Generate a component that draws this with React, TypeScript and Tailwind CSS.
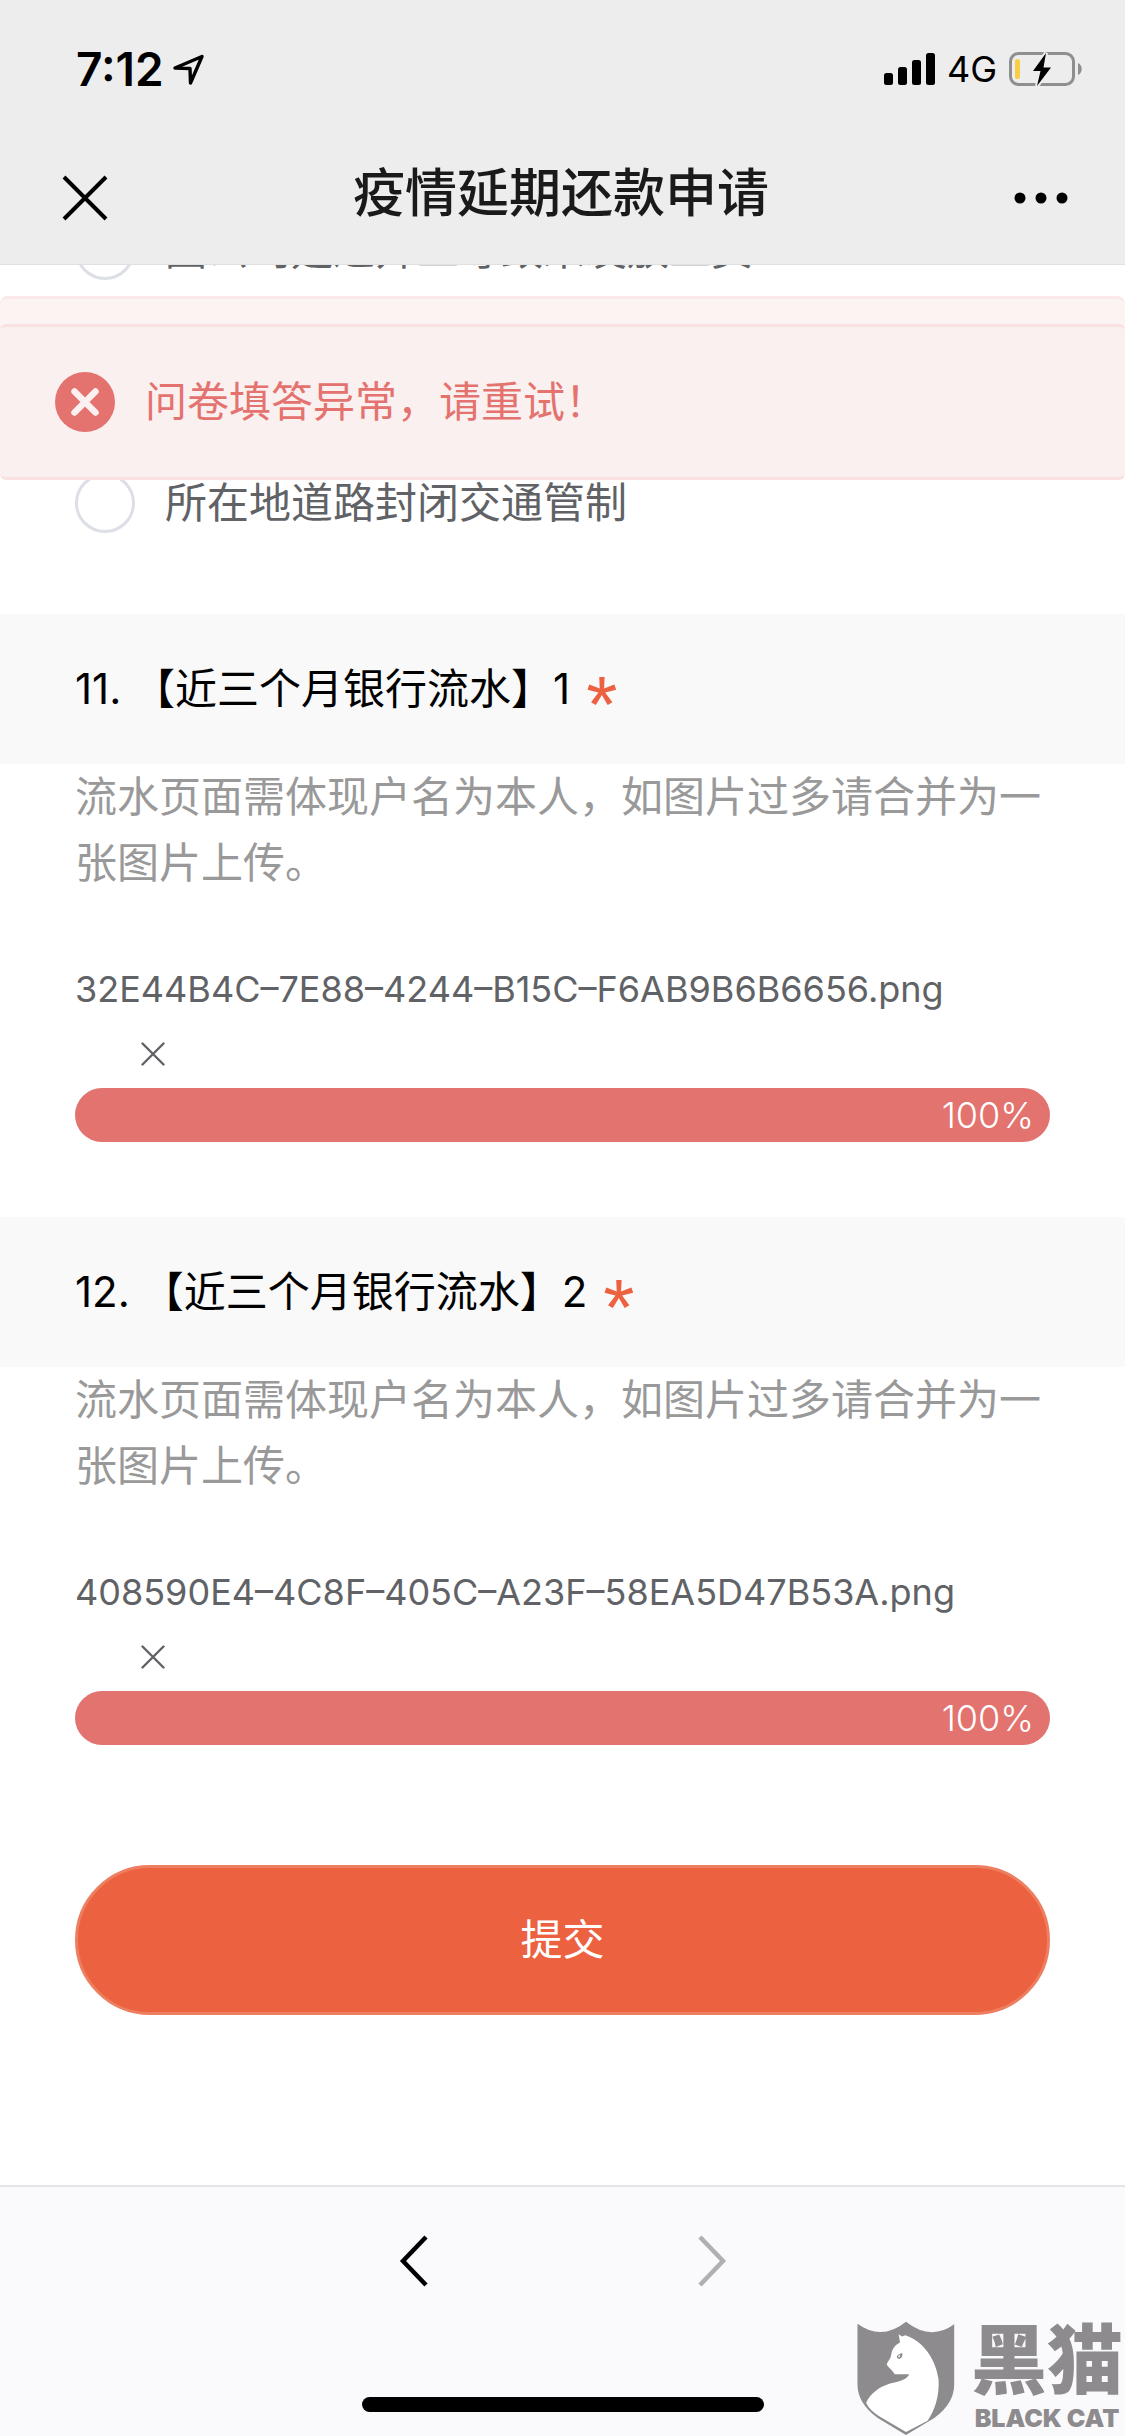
import { useState } from "react";

interface UploadQuestion {
  id: number;
  title: string;
  file: string;
  percent: number;
}

const OPTIONS: string[] = ["因公司延迟开工导致未发放工资", "所在地道路封闭交通管制"];

const QUESTIONS: UploadQuestion[] = [
  { id: 11, title: "【近三个月银行流水】1", file: "32E44B4C–7E88–4244–B15C–F6AB9B6B6656.png", percent: 100 },
  { id: 12, title: "【近三个月银行流水】2", file: "408590E4–4C8F–405C–A23F–58EA5D47B53A.png", percent: 100 },
];

const StatusBar = () => (
  <div className="flex h-[138px] items-center justify-between pr-[43px] pl-[76px]">
    <div className="flex items-center gap-2">
      <span className="text-[46px] leading-none font-semibold text-black">7:12</span>
      <svg className="h-8 w-8" viewBox="0 0 32 32" fill="none" stroke="#000" strokeWidth="3.4" strokeLinejoin="round">
        <path d="M3 15 30 3.5 18.5 30 18 15.5Z" />
      </svg>
    </div>
    <div className="flex items-center gap-3">
      <svg className="h-8 w-[51px]" viewBox="0 0 51 32" fill="#000">
        <rect x="0" y="20" width="9" height="12" rx="2.5" />
        <rect x="14" y="14" width="9" height="18" rx="2.5" />
        <rect x="28" y="7" width="9" height="25" rx="2.5" />
        <rect x="42" y="0" width="9" height="32" rx="2.5" />
      </svg>
      <span className="text-[36px] leading-none text-black">4G</span>
      <svg className="h-[34px] w-[73px]" viewBox="0 0 73 34">
        <rect x="1.5" y="1.5" width="63" height="31" rx="8" fill="none" stroke="#8f8f8f" strokeWidth="3" />
        <path d="M69 11c5 2 5 10 0 12Z" fill="#8f8f8f" />
        <rect x="6" y="7" width="5" height="20" rx="2" fill="#f7ce46" />
        <path d="M37 1 24 19h7.5L28 34 42 15.5h-7.5Z" fill="#000" stroke="#eeeded" strokeWidth="4" paintOrder="stroke" />
      </svg>
    </div>
  </div>
);

const NavBar = () => (
  <div className="flex h-[120px] items-center justify-between pr-[57px] pl-[62px]">
    <button type="button" aria-label="关闭">
      <svg className="h-[46px] w-[46px]" viewBox="0 0 46 46" stroke="#000" strokeWidth="4">
        <path d="M2 2 44 44M44 2 2 44" />
      </svg>
    </button>
    <h1 className="pb-2 text-[52px] leading-none font-medium text-[#1a1a1a]">疫情延期还款申请</h1>
    <button type="button" aria-label="更多">
      <svg className="h-3 w-[54px]" viewBox="0 0 54 12">
        <circle cx="6" cy="6" r="5.5" />
        <circle cx="27" cy="6" r="5.5" />
        <circle cx="48" cy="6" r="5.5" />
      </svg>
    </button>
  </div>
);

const ErrorToast = () => (
  <div className="absolute inset-x-0 top-[296px]">
    <div className="h-[60px] rounded-lg border-y-[3px] border-[#fbe8e8] bg-[#fcf3f3]" />
    <div
      role="alert"
      className="absolute inset-x-0 top-7 flex h-[156px] items-center gap-[30px] rounded-md border-y-[3px] border-[#f9e1e1] bg-[#faf0ef] px-[55px] text-[42px] leading-none text-[#e4736f]"
    >
      <svg className="h-[60px] w-[60px]" viewBox="0 0 60 60">
        <circle cx="30" cy="30" r="30" fill="#e4736f" />
        <path d="M19.5 19.5 40.5 40.5M40.5 19.5 19.5 40.5" stroke="#faf0ef" strokeWidth="6.5" strokeLinecap="round" />
      </svg>
      <p>问卷填答异常，请重试！</p>
    </div>
  </div>
);

const UploadCard = ({ question }: { question: UploadQuestion }) => (
  <section className="pb-[75px]">
    <h2 className="flex h-[150px] items-center bg-[#f9f9f9] px-[75px] text-[42px] leading-none text-black">
      <span>
        {question.id}. {question.title}
      </span>
      <span className="pt-8 pl-4 font-['Liberation_Sans',sans-serif] text-[80px] leading-none text-[#ec6140]">*</span>
    </h2>
    <div className="px-[75px]">
      <p className="text-[42px] leading-[66px] text-[#999]">流水页面需体现户名为本人，如图片过多请合并为一张图片上传。</p>
      <p className="mt-[60px] text-[36px] leading-[66px] text-[#606266]">{question.file}</p>
      <div className="flex h-16 items-center pl-[66px]">
        <button type="button" aria-label="删除文件">
          <svg className="h-6 w-6" viewBox="0 0 24 24" stroke="#606266" strokeWidth="2.4" strokeLinecap="round">
            <path d="M1.5 1.5 22.5 22.5M22.5 1.5 1.5 22.5" />
          </svg>
        </button>
      </div>
      <div className="mt-[2px] h-[54px] rounded-full bg-[#ebeef5]">
        <div
          className="flex h-full items-center justify-end rounded-full bg-[#e3736f] pr-4 text-[36px] leading-none font-light text-white"
          style={{ width: `${question.percent}%` }}
        >
          {question.percent}%
        </div>
      </div>
    </div>
  </section>
);

const BlackCatMark = () => (
  <div className="absolute right-0 bottom-0 flex items-end gap-4 text-[#8e8b8e]">
    <svg className="h-[115px] w-[98px]" viewBox="93 74 294 346">
      <path
        d="M94 82Q167 135 240 76Q315 135 385 84V265Q385 322 325 366L240 417L155 366Q94 322 94 265Z"
        fill="currentColor"
      />
      <path
        d="M218 114 228 121 238 117C292 134 330 190 338 250C341 300 326 345 305 374L240 408 158 360C140 348 128 337 120 320C132 292 160 272 192 262C220 255 240 252 250 234H206C200 222 186 214 182 204C186 194 194 188 195 178C198 158 208 146 222 139Z"
        fill="#fff"
      />
      <path d="M212 182Q216 172 229 171Q231 184 220 188Q213 187 212 182Z" fill="currentColor" />
      <path d="M216 180 222 174 221 184Z" fill="#fff" />
    </svg>
    <div className="flex flex-col items-center pr-[2px]">
      <span className="text-[76px] leading-[80px] font-black">黑猫</span>
      <span className="pt-1 pb-1 text-[25px] leading-7 font-black">BLACK CAT</span>
    </div>
  </div>
);

const App = () => {
  const [selected, setSelected] = useState<string>("");

  return (
    <div className="relative flex min-h-screen flex-col bg-white font-['Inter','Noto_Sans_CJK_SC',sans-serif]">
      <header className="absolute inset-x-0 top-0 z-20 h-[265px] border-b border-[#e0e0e0] bg-[#eeeded]">
        <StatusBar />
        <NavBar />
      </header>

      <main className="flex-1 pt-[220px]">
        <div className="flex flex-col gap-[193px] px-[75px] pb-[81px]">
          {OPTIONS.map((option) => (
            <label key={option} className="flex h-[60px] items-center gap-[30px] text-[42px] leading-none text-[#606266]">
              <input
                type="radio"
                name="reason"
                checked={selected === option}
                onChange={() => setSelected(option)}
                className="h-[60px] w-[60px] appearance-none rounded-full border-[3px] border-[#dcdfe6] bg-white checked:border-[18px] checked:border-[#ec6140]"
              />
              {option}
            </label>
          ))}
        </div>
        <ErrorToast />

        {QUESTIONS.map((question) => (
          <UploadCard key={question.id} question={question} />
        ))}

        <div className="px-[75px] pt-[45px] pb-[120px]">
          <button
            type="submit"
            className="h-[150px] w-full rounded-full border-[3px] border-[#ee7e60] bg-[#ec6140] text-[42px] leading-none text-white"
          >
            提交
          </button>
        </div>
      </main>

      <footer className="relative border-t-2 border-[#e5e5e7] bg-[#fafafc]">
        <nav className="flex h-[147px] items-center justify-center gap-[268px]">
          <button type="button" aria-label="后退">
            <svg className="h-[54px] w-[30px]" viewBox="0 0 30 54" fill="none" stroke="#000" strokeWidth="4.5">
              <path d="M27 3 4 27 27 51" />
            </svg>
          </button>
          <button type="button" aria-label="前进" disabled>
            <svg className="h-[54px] w-[30px]" viewBox="0 0 30 54" fill="none" stroke="#b0b0b2" strokeWidth="4.5">
              <path d="M3 3 26 27 3 51" />
            </svg>
          </button>
        </nav>
        <div className="mx-auto mt-[63px] mb-6 h-[15px] w-[402px] rounded-full bg-black" />
        <BlackCatMark />
      </footer>
    </div>
  );
};

export default App;
